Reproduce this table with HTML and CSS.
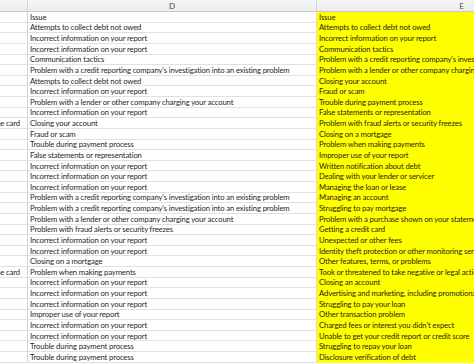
FILE: index.html
```html
<!DOCTYPE html>
<html>
<head>
<meta charset="utf-8">
<link rel="stylesheet" href="styles.css">
</head>
<body>
<div class="sheet">
  <div class="hdr c"></div><div class="hdr d">D</div><div class="hdr e">E</div>

  <div class="cell c"></div><div class="cell d">Issue</div><div class="cell e">Issue</div>
  <div class="cell c"></div><div class="cell d">Attempts to collect debt not owed</div><div class="cell e">Attempts to collect debt not owed</div>
  <div class="cell c"></div><div class="cell d">Incorrect information on your report</div><div class="cell e">Incorrect information on your report</div>
  <div class="cell c"></div><div class="cell d">Incorrect information on your report</div><div class="cell e">Communication tactics</div>
  <div class="cell c"></div><div class="cell d">Communication tactics</div><div class="cell e">Problem with a credit reporting company's investigation into an existing problem</div>
  <div class="cell c"></div><div class="cell d">Problem with a credit reporting company's investigation into an existing problem</div><div class="cell e">Problem with a lender or other company charging your account</div>
  <div class="cell c"></div><div class="cell d">Attempts to collect debt not owed</div><div class="cell e">Closing your account</div>
  <div class="cell c"></div><div class="cell d">Incorrect information on your report</div><div class="cell e">Fraud or scam</div>
  <div class="cell c"></div><div class="cell d">Problem with a lender or other company charging your account</div><div class="cell e">Trouble during payment process</div>
  <div class="cell c"></div><div class="cell d">Incorrect information on your report</div><div class="cell e">False statements or representation</div>
  <div class="cell c"><span>ne card</span></div><div class="cell d">Closing your account</div><div class="cell e">Problem with fraud alerts or security freezes</div>
  <div class="cell c"></div><div class="cell d">Fraud or scam</div><div class="cell e">Closing on a mortgage</div>
  <div class="cell c"></div><div class="cell d">Trouble during payment process</div><div class="cell e">Problem when making payments</div>
  <div class="cell c"></div><div class="cell d">False statements or representation</div><div class="cell e">Improper use of your report</div>
  <div class="cell c"></div><div class="cell d">Incorrect information on your report</div><div class="cell e">Written notification about debt</div>
  <div class="cell c"></div><div class="cell d">Incorrect information on your report</div><div class="cell e">Dealing with your lender or servicer</div>
  <div class="cell c"></div><div class="cell d">Incorrect information on your report</div><div class="cell e">Managing the loan or lease</div>
  <div class="cell c"></div><div class="cell d">Problem with a credit reporting company's investigation into an existing problem</div><div class="cell e">Managing an account</div>
  <div class="cell c"></div><div class="cell d">Problem with a credit reporting company's investigation into an existing problem</div><div class="cell e">Struggling to pay mortgage</div>
  <div class="cell c"></div><div class="cell d">Problem with a lender or other company charging your account</div><div class="cell e">Problem with a purchase shown on your statement</div>
  <div class="cell c"></div><div class="cell d">Problem with fraud alerts or security freezes</div><div class="cell e">Getting a credit card</div>
  <div class="cell c"></div><div class="cell d">Incorrect information on your report</div><div class="cell e">Unexpected or other fees</div>
  <div class="cell c"></div><div class="cell d">Incorrect information on your report</div><div class="cell e">Identity theft protection or other monitoring services</div>
  <div class="cell c"></div><div class="cell d">Closing on a mortgage</div><div class="cell e">Other features, terms, or problems</div>
  <div class="cell c"><span>ne card</span></div><div class="cell d">Problem when making payments</div><div class="cell e">Took or threatened to take negative or legal action</div>
  <div class="cell c"></div><div class="cell d">Incorrect information on your report</div><div class="cell e">Closing an account</div>
  <div class="cell c"></div><div class="cell d">Incorrect information on your report</div><div class="cell e">Advertising and marketing, including promotional offers</div>
  <div class="cell c"></div><div class="cell d">Incorrect information on your report</div><div class="cell e">Struggling to pay your loan</div>
  <div class="cell c"></div><div class="cell d">Improper use of your report</div><div class="cell e">Other transaction problem</div>
  <div class="cell c"></div><div class="cell d">Incorrect information on your report</div><div class="cell e">Charged fees or interest you didn't expect</div>
  <div class="cell c"></div><div class="cell d">Incorrect information on your report</div><div class="cell e">Unable to get your credit report or credit score</div>
  <div class="cell c"></div><div class="cell d">Trouble during payment process</div><div class="cell e">Struggling to repay your loan</div>
  <div class="cell c"></div><div class="cell d">Trouble during payment process</div><div class="cell e">Disclosure verification of debt</div>
</div>
</body>
</html>
```

FILE: styles.css
```css
html, body {
  margin: 0;
  padding: 0;
  background: #ffffff;
  overflow: hidden;
}

.sheet {
  width: 474px;
  height: 363px;
  overflow: hidden;
  display: grid;
  grid-template-columns: 28px 289px 290px;
  grid-template-rows: 12px;
  grid-auto-rows: 10.63px;
  font-family: Lato, "Liberation Sans", sans-serif;
  font-size: 7.7px;
  letter-spacing: -0.13px;
  color: #1f1f1f;
}

.hdr {
  box-sizing: border-box;
  background: linear-gradient(#f6f6f6, #ececec);
  border-bottom: 1px solid #c8c8c8;
  border-right: 1px solid #d6d6d6;
  display: flex;
  align-items: center;
  justify-content: center;
  font-size: 8px;
  letter-spacing: 0;
  color: #4a4a4a;
}

.cell {
  box-sizing: border-box;
  white-space: nowrap;
  overflow: hidden;
  line-height: 10px;
  display: flex;
  align-items: center;
  border-bottom: 1px solid #e0e0e0;
}

.cell.c {
  border-right: 1px solid #d4d4d4;
  justify-content: flex-end;
  padding-right: 7px;
}

.cell.c span {
  flex: none;
}

.cell.d {
  padding-left: 2px;
  border-right: 1px solid #dcdcdc;
}

.cell.e {
  padding-left: 2px;
  background: #ffff00;
  border-bottom-color: #ffff00;
  color: #262616;
}
```
